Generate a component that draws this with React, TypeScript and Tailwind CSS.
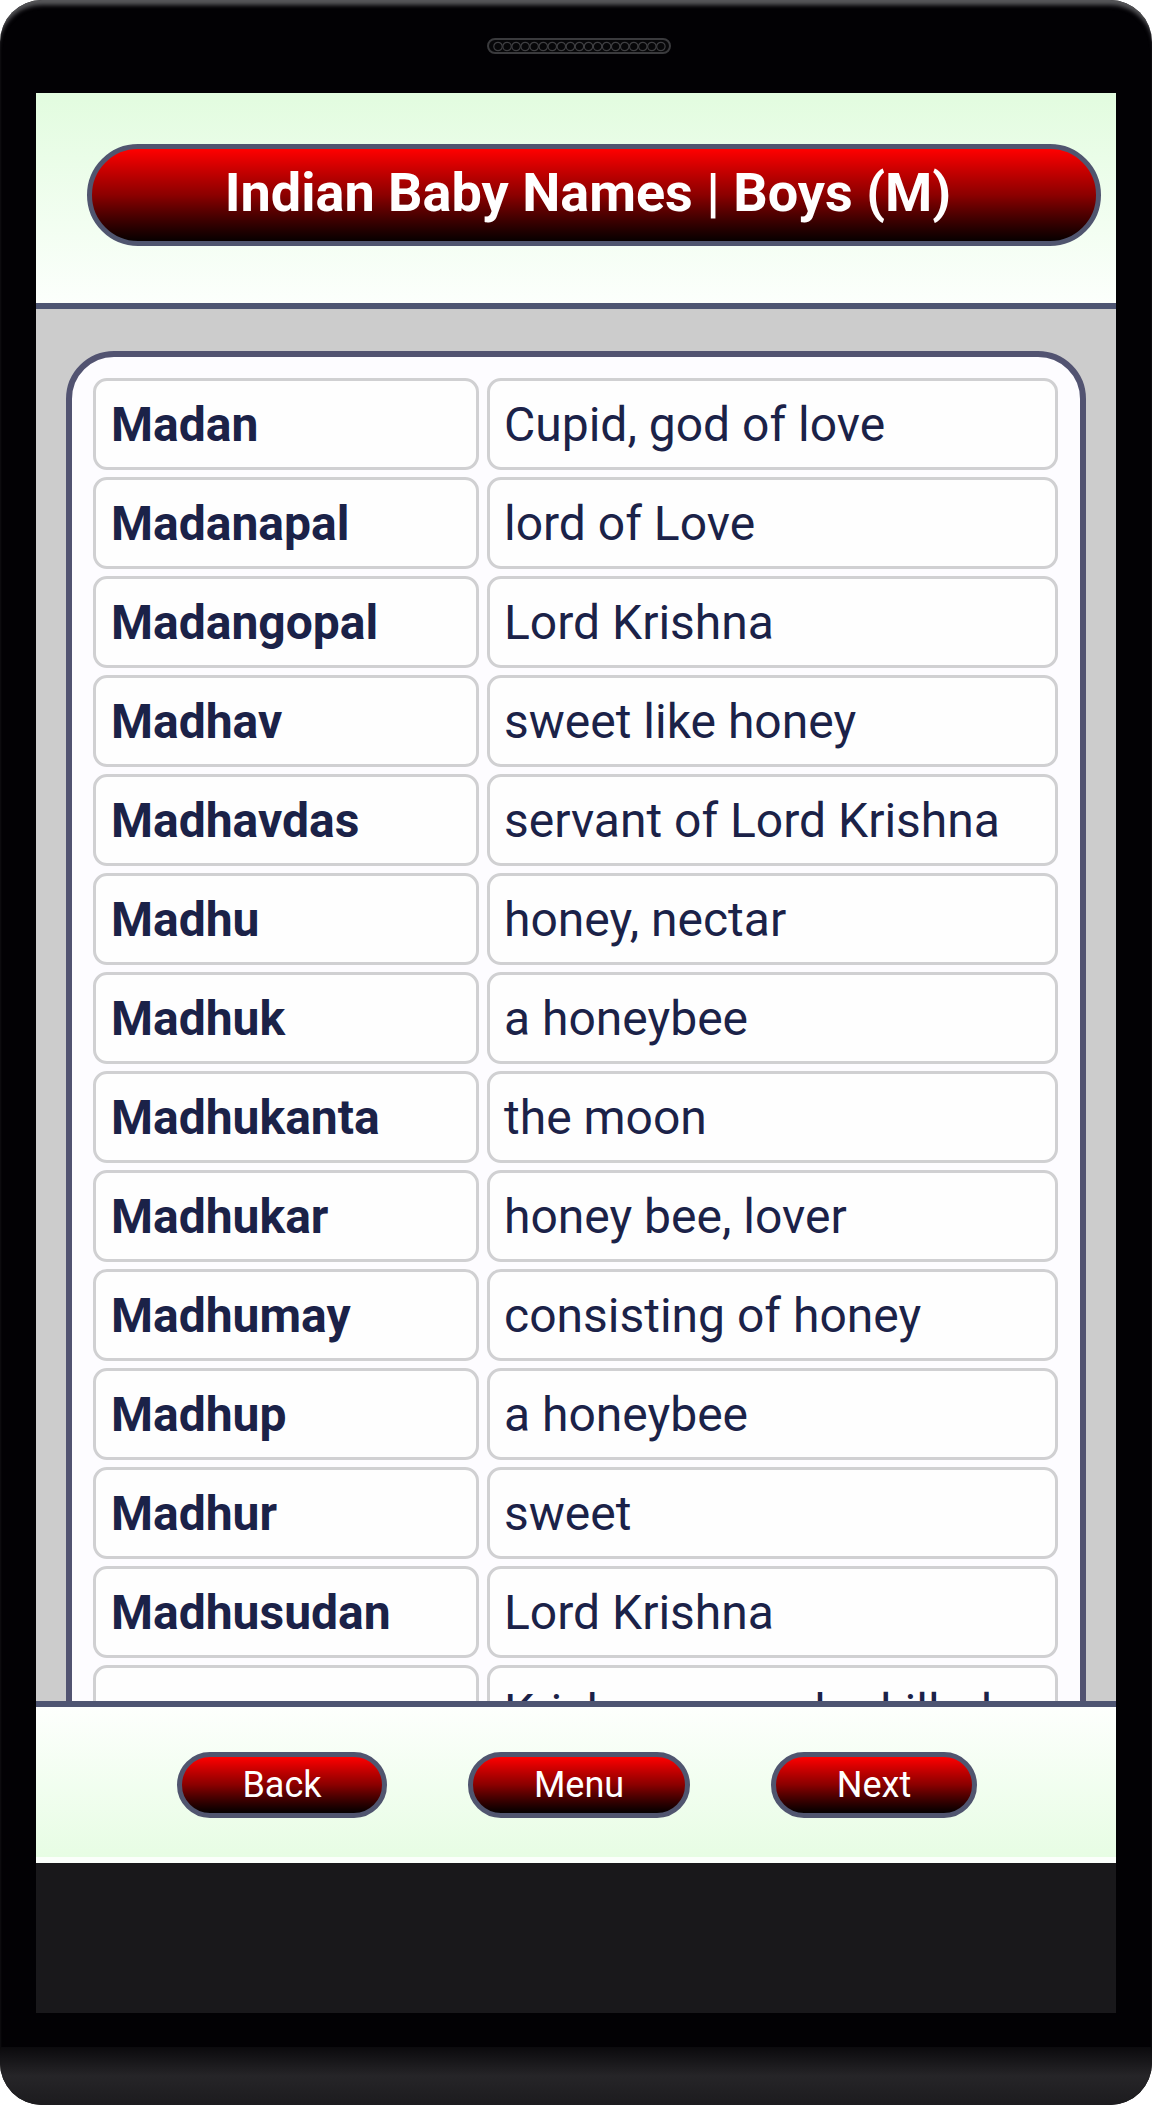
import React from "react";

const rows: [string, string][] = [
  ["Madan", "Cupid, god of love"],
  ["Madanapal", "lord of Love"],
  ["Madangopal", "Lord Krishna"],
  ["Madhav", "sweet like honey"],
  ["Madhavdas", "servant of Lord Krishna"],
  ["Madhu", "honey, nectar"],
  ["Madhuk", "a honeybee"],
  ["Madhukanta", "the moon"],
  ["Madhukar", "honey bee, lover"],
  ["Madhumay", "consisting of honey"],
  ["Madhup", "a honeybee"],
  ["Madhur", "sweet"],
  ["Madhusudan", "Lord Krishna"],
  ["Madhusudana", "Krishna, one who killed demon Madhu"],
];

function Speaker() {
  const circles = Array.from({ length: 19 }, (_, i) => 11 + i * 9.05);
  return (
    <svg width="184" height="16" viewBox="0 0 184 16">
      <rect x="1" y="1" width="182" height="14" rx="7" fill="#070709" stroke="#3a3a3d" strokeWidth="2" />
      {circles.map((cx, i) => (
        <circle key={i} cx={cx} cy="8.5" r="4.2" fill="none" stroke="#3f3f42" strokeWidth="1.2" />
      ))}
    </svg>
  );
}

function NavButton({ label, w }: { label: string; w: string }) {
  return (
    <div
      className={`${w} h-[66px] rounded-full border-[5px] border-[#50556f] bg-gradient-to-b from-[#ff0000] via-[#8a0000] to-[#050000] flex items-center justify-center text-white text-[36px] leading-none`}
    >
      {label}
    </div>
  );
}

export default function App() {
  return (
    <div className="w-[1152px] h-[2105px] bg-white" style={{ fontFamily: "Roboto, 'Noto Sans', sans-serif" }}>
      <div className="w-full h-full rounded-[42px] bg-[#020104] flex flex-col overflow-hidden shadow-[inset_0_7px_4px_-2px_rgba(92,92,95,0.95)]">
        {/* top bezel */}
        <div className="h-[93px] shrink-0 flex justify-center pt-[38px] pl-[6px]">
          <Speaker />
        </div>
        {/* screen */}
        <div className="mx-[36px] flex flex-col shrink-0">
          {/* header */}
          <div className="h-[210px] bg-gradient-to-b from-[#e2fcdf] to-[#fcfffc] pt-[51px] pl-[51px] pr-[15px]">
            <div className="h-[102px] rounded-full border-[5px] border-[#50556f] bg-gradient-to-b from-[#ff0000] via-[#8c0000] to-[#080000] flex items-center justify-center pr-[12px] pb-[5px]">
              <span className="text-white font-bold text-[54px] leading-none">Indian Baby Names | Boys (M)</span>
            </div>
          </div>
          <div className="h-[6px] bg-[#4e5572]" />
          {/* content */}
          <div className="h-[1392px] bg-[#cccccc] overflow-hidden px-[30px] pt-[42px]">
            <div className="rounded-[48px] border-[6px] border-[#525371] bg-[#fdfcff] pt-[21px] pl-[21px] pr-[22px] pb-[30px]">
              <div className="grid grid-cols-[386px_571px] gap-x-[8px] gap-y-[7px]">
                {rows.map(([name, meaning]) => (
                  <React.Fragment key={name}>
                    <div className="min-h-[92px] rounded-[14px] border-[3px] border-[#d0d0d2] bg-[#fefefe] flex items-center pl-[15px] pr-[10px] pt-[2px] text-[#1b2248] font-bold text-[48px] leading-[56px]">
                      {name}
                    </div>
                    <div className="min-h-[92px] rounded-[14px] border-[3px] border-[#d0d0d2] bg-[#fefefe] flex items-center pl-[14px] pr-[16px] pt-[16px] pb-[14px] text-[#1b2248] text-[48px] leading-[56px]">
                      {meaning}
                    </div>
                  </React.Fragment>
                ))}
              </div>
            </div>
          </div>
          <div className="h-[6px] bg-[#4e5572]" />
          {/* footer */}
          <div className="h-[150px] bg-gradient-to-b from-[#fdfffd] to-[#e7fde4] flex justify-center pt-[45px] gap-[81px] pl-[2px]">
            <NavButton label="Back" w="w-[210px]" />
            <NavButton label="Menu" w="w-[222px]" />
            <NavButton label="Next" w="w-[206px]" />
          </div>
          <div className="h-[6px] bg-[#fbfffb]" />
          <div className="h-[150px] bg-[#19181b]" />
        </div>
        {/* bottom bezel */}
        <div className="h-[34px] shrink-0" />
        <div className="flex-1 bg-gradient-to-b from-[#0b0a0d] via-[#262528] to-[#1c1b1e]" />
      </div>
    </div>
  );
}
